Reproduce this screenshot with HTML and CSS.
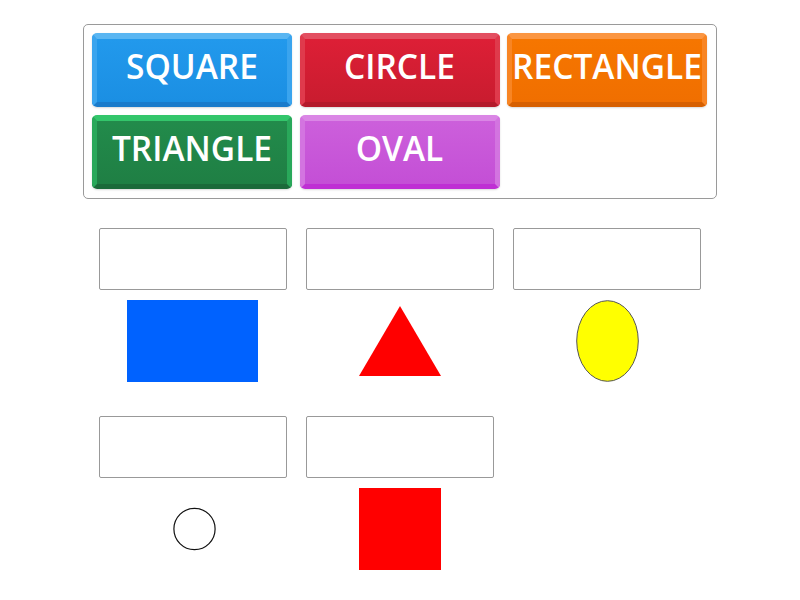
FILE: index.html
```html
<!DOCTYPE html>
<html>
<head>
<meta charset="utf-8">
<link rel="stylesheet" href="styles.css">
</head>
<body>
<div class="bank">
  <div class="tile blue">SQUARE</div>
  <div class="tile red">CIRCLE</div>
  <div class="tile orange">RECTANGLE</div>
  <div class="tile green">TRIANGLE</div>
  <div class="tile purple">OVAL</div>
</div>
<div class="targets">
  <div class="cell">
    <div class="drop"></div>
    <div class="pic">
      <svg width="132" height="82" viewBox="0 0 132 82"><rect x="0" y="0" width="131" height="82" fill="#0062ff"/></svg>
    </div>
  </div>
  <div class="cell">
    <div class="drop"></div>
    <div class="pic">
      <svg width="82" height="70" viewBox="0 0 82 70"><polygon points="41,0 82,70 0,70" fill="#ff0000"/></svg>
    </div>
  </div>
  <div class="cell">
    <div class="drop"></div>
    <div class="pic">
      <svg width="63" height="82" viewBox="0 0 63 82"><ellipse cx="31.5" cy="41" rx="30.8" ry="40.3" fill="#ffff00" stroke="#555" stroke-width="1"/></svg>
    </div>
  </div>
  <div class="cell">
    <div class="drop"></div>
    <div class="pic">
      <svg width="46" height="44" viewBox="0 0 46 44"><circle cx="24.5" cy="22" r="20.6" fill="#fff" stroke="#111" stroke-width="1.2"/></svg>
    </div>
  </div>
  <div class="cell">
    <div class="drop"></div>
    <div class="pic">
      <svg width="82" height="82" viewBox="0 0 82 82"><rect x="0" y="0" width="82" height="82" fill="#ff0000"/></svg>
    </div>
  </div>
</div>
</body>
</html>
```

FILE: styles.css
```css
html, body {
  margin: 0;
  padding: 0;
  background: #fff;
  font-family: "Open Sans", "Liberation Sans", sans-serif;
}

.bank {
  box-sizing: border-box;
  width: 634px;
  margin: 24px auto 0;
  padding: 8px 9px 9px 8px;
  border: 1px solid #9a9a9a;
  border-radius: 5px;
  display: grid;
  grid-template-columns: repeat(3, 1fr);
  grid-auto-rows: 74px;
  gap: 8px 7.5px;
}

.tile {
  box-sizing: border-box;
  display: flex;
  align-items: center;
  justify-content: center;
  padding-bottom: 7px;
  border-radius: 5px;
  border-style: solid;
  border-width: 6px 5px 5px 5px;
  color: #fff;
  font-weight: 600;
  font-size: 33.5px;
  line-height: 1;
  letter-spacing: 0;
  white-space: nowrap;
  box-shadow: 0 1px 2px rgba(0,0,0,0.15);
}

.blue {
  background: linear-gradient(#2299ec, #1b8fe3);
  border-color: #5ab6f2 #3aa4ee #1a7bcb #3aa4ee;
}
.red {
  background: linear-gradient(#dd1f36, #c91c2f);
  border-color: #e34f61 #df3a4c #b41a2b #df3a4c;
}
.orange {
  background: linear-gradient(#f67600, #f06f00);
  border-color: #fb9642 #f88524 #d65f00 #f88524;
}
.green {
  background: linear-gradient(#228b4b, #1f7f44);
  border-color: #33c66b #29a85a #1b6a3a #29a85a;
}
.purple {
  background: linear-gradient(#cc5fdb, #c44fd6);
  border-color: #da86e5 #d374e0 #bf2fd4 #d374e0;
}

.targets {
  width: 602px;
  margin: 29px auto 0;
  display: grid;
  grid-template-columns: repeat(3, 188px);
  column-gap: 19px;
  row-gap: 34px;
}

.cell {
  display: flex;
  flex-direction: column;
  gap: 10px;
}

.drop {
  box-sizing: border-box;
  height: 62px;
  border: 1px solid #999;
  border-radius: 2px;
  background: #fff;
}

.pic {
  height: 82px;
  display: flex;
  align-items: center;
  justify-content: center;
}

.pic svg {
  display: block;
}
```
